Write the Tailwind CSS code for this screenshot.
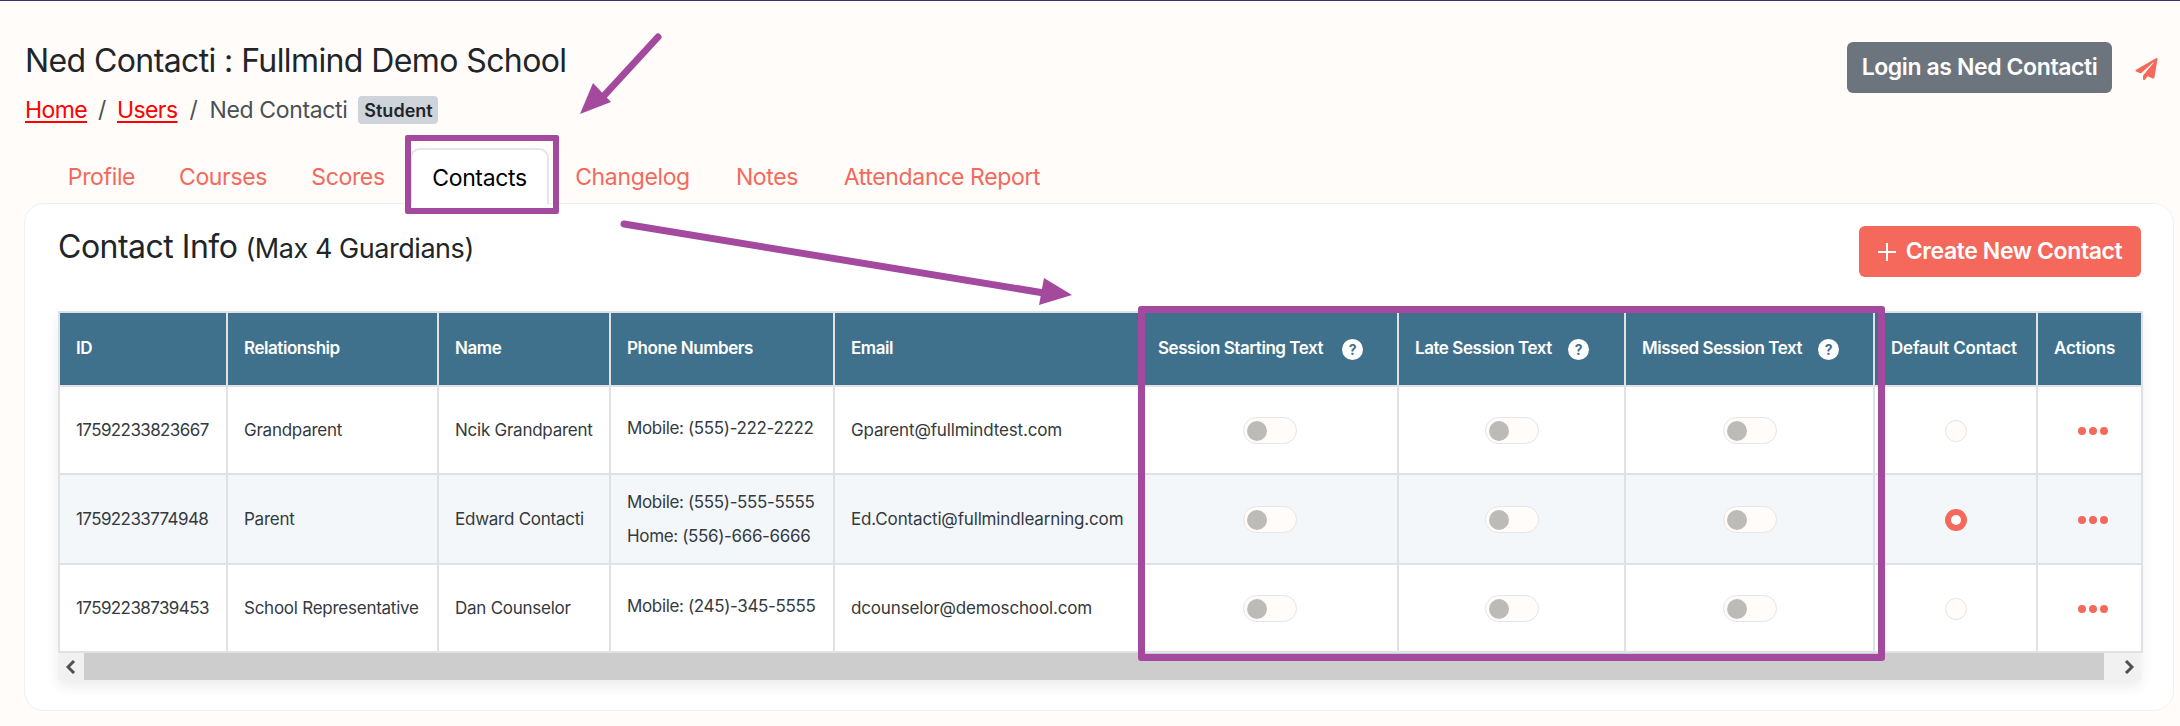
<!doctype html>
<html>
<head>
<meta charset="utf-8">
<script src="https://cdn.jsdelivr.net/npm/@tailwindcss/browser@4"></script>
</head>
<body class="m-0">
<div class="relative h-[726px] w-[2180px] overflow-hidden border-t border-[#3b2f6e] bg-[#fffcf9] font-['Inter',sans-serif] text-[#212529]">

	<!-- header -->
	<div class="flex h-[135px] justify-between pl-[25px] pr-[22px] pt-[41px]">
		<div class="flex flex-col">
			<h1 class="h-[38px] text-[32px] leading-[38px] tracking-[-0.6px]">Ned Contacti : Fullmind Demo School</h1>
			<div class="mt-[16px] flex h-[28px] items-center text-[23px] tracking-[-0.35px] text-[#495057]">
				<a class="tracking-[-0.6px] text-[#f00] underline decoration-[1.5px] underline-offset-[3px]">Home</a>
				<span class="mx-[11px]">/</span>
				<a class="tracking-[-0.6px] text-[#f00] underline decoration-[1.5px] underline-offset-[3px]">Users</a>
				<span class="mx-[12px]">/</span>
				<span>Ned Contacti</span>
				<span class="ml-[11px] flex h-[28px] w-[80px] items-center justify-center rounded-[4px] bg-[#ced4da] text-[18px] font-semibold tracking-normal text-[#212529]">Student</span>
			</div>
		</div>
		<div class="flex items-start">
			<button class="h-[51px] w-[265px] rounded-[6px] bg-[#6c757d] text-[23px] font-semibold tracking-[-0.4px] text-white">Login as Ned Contacti</button>
			<svg class="ml-[23px] mt-[16px] h-[22px] w-[23px] fill-[#f4695c]" viewBox="0 0 512 512"><path d="M476 3.2L12.5 270.6c-18.1 10.4-15.8 35.6 2.2 43.2L121 358.4l287.3-253.2c5.5-4.9 13.3 2.6 8.6 8.3L176 407v80.5c0 23.6 28.5 32.9 42.5 15.8L282 426l124.6 52.2c14.2 6 30.4-2.9 33-18.2l72-432C515 7.8 493.3-6.8 476 3.2z"/></svg>
		</div>
	</div>

	<!-- tabs -->
	<div class="relative z-10 flex h-[67px] gap-[6px] pl-[49px] pt-[12px] text-center text-[23px] leading-[59px] tracking-[-0.35px] text-[#f4695c]">
		<a class="w-[105px]">Profile</a>
		<a class="w-[126px]">Courses</a>
		<a class="w-[112px]">Scores</a>
		<a class="h-[56px] w-[139px] rounded-t-[10px] border-2 border-b-0 border-[#e2e5e9] bg-white leading-[56px] text-black">Contacts</a>
		<a class="w-[155px]">Changelog</a>
		<a class="w-[102px]">Notes</a>
		<a class="w-[236px]">Attendance Report</a>
	</div>

	<!-- card -->
	<div class="ml-[24px] h-[508px] w-[2150px] rounded-[20px] border border-[#f0f0f0] bg-white pl-[33px] pr-[33px] pt-[22px]">
		<div class="flex h-[85px] w-[2083px] items-start justify-between">
			<h2 class="flex items-baseline text-[32px] leading-[42px] tracking-[-0.5px] text-[#212529]">Contact Info<span class="ml-[8px] text-[27px] tracking-[-0.45px]">(Max 4 Guardians)</span></h2>
			<button class="flex h-[51px] w-[282px] items-center justify-center gap-[10px] rounded-[6px] bg-[#f4695c] text-[23px] font-semibold tracking-[-0.4px] text-white">
				<svg class="h-[18px] w-[18px] stroke-white" viewBox="0 0 18 18" fill="none" stroke-width="2"><path d="M9 0v18M0 9h18"/></svg>
				Create New Contact
			</button>
		</div>

		<!-- table with its scrollbar -->
		<div class="w-[2083px] shadow-[0_6px_12px_rgba(0,0,0,0.08)]">
			<table class="w-[2083px] table-fixed border-collapse border-t-2 border-[#dee2e6] text-[17px] tracking-[-0.25px] text-[#343a40] [&_td]:border-2 [&_td]:border-[#dee2e6] [&_td]:px-[16px] [&_td]:pt-[1px] [&_th]:border-2 [&_th]:border-[#dee2e6] [&_th]:px-[16px] [&_th]:text-left [&_th]:font-semibold [&_th]:tracking-[-0.45px]">
				<colgroup>
					<col class="w-[168px]"><col class="w-[211px]"><col class="w-[172px]"><col class="w-[224px]"><col class="w-[307px]"><col class="w-[257px]"><col class="w-[227px]"><col class="w-[249px]"><col class="w-[163px]"><col class="w-[105px]">
				</colgroup>
				<thead>
					<tr class="h-[74px] bg-[#40718c] text-white">
						<th>ID</th>
						<th>Relationship</th>
						<th>Name</th>
						<th>Phone Numbers</th>
						<th>Email</th>
						<th><div class="flex items-center justify-between pr-[18px]">Session Starting Text<span class="flex h-[21px] w-[21px] items-center justify-center rounded-full bg-white text-[14px] font-bold text-[#40718c]">?</span></div></th>
						<th><div class="flex items-center justify-between pr-[19px]">Late Session Text<span class="flex h-[21px] w-[21px] items-center justify-center rounded-full bg-white text-[14px] font-bold text-[#40718c]">?</span></div></th>
						<th><div class="flex items-center justify-between pr-[18px]">Missed Session Text<span class="flex h-[21px] w-[21px] items-center justify-center rounded-full bg-white text-[14px] font-bold text-[#40718c]">?</span></div></th>
						<th class="whitespace-nowrap !tracking-[-0.2px]">Default Contact</th>
						<th class="!tracking-[-0.2px]">Actions</th>
					</tr>
				</thead>
				<tbody>
					<tr class="h-[88px]">
						<td class="tracking-[-0.6px]">17592233823667</td>
						<td>Grandparent</td>
						<td class="whitespace-nowrap">Ncik Grandparent</td>
						<td class="whitespace-nowrap tracking-[-0.35px]"><p class="mb-[4px]">Mobile: (555)-222-2222</p></td>
						<td class="tracking-[-0.15px]">Gparent@fullmindtest.com</td>
						<td><div class="mx-auto flex h-[27px] w-[54px] items-center rounded-full border border-[#e5e5e5] bg-[#fffcf9] pl-[3px]"><span class="h-[20px] w-[20px] rounded-full bg-[#bdbbb8]"></span></div></td>
						<td><div class="mx-auto flex h-[27px] w-[54px] items-center rounded-full border border-[#e5e5e5] bg-[#fffcf9] pl-[3px]"><span class="h-[20px] w-[20px] rounded-full bg-[#bdbbb8]"></span></div></td>
						<td><div class="mx-auto flex h-[27px] w-[54px] items-center rounded-full border border-[#e5e5e5] bg-[#fffcf9] pl-[3px]"><span class="h-[20px] w-[20px] rounded-full bg-[#bdbbb8]"></span></div></td>
						<td><div class="mx-auto h-[22px] w-[22px] rounded-full border border-[#e5e5e5] bg-[#fffcf9]"></div></td>
						<td class="!pl-[40px]"><div class="flex gap-[3px] pt-[1px]"><span class="h-[8px] w-[8px] rounded-full bg-[#f4695c]"></span><span class="h-[8px] w-[8px] rounded-full bg-[#f4695c]"></span><span class="h-[8px] w-[8px] rounded-full bg-[#f4695c]"></span></div></td>
					</tr>
					<tr class="h-[90px] bg-[#f3f7fa]">
						<td class="tracking-[-0.6px]">17592233774948</td>
						<td>Parent</td>
						<td class="whitespace-nowrap">Edward Contacti</td>
						<td class="whitespace-nowrap tracking-[-0.35px]"><p class="mb-[8px]">Mobile: (555)-555-5555</p><p>Home: (556)-666-6666</p></td>
						<td class="tracking-[-0.15px]">Ed.Contacti@fullmindlearning.com</td>
						<td><div class="mx-auto flex h-[27px] w-[54px] items-center rounded-full border border-[#e5e5e5] bg-[#fffcf9] pl-[3px]"><span class="h-[20px] w-[20px] rounded-full bg-[#bdbbb8]"></span></div></td>
						<td><div class="mx-auto flex h-[27px] w-[54px] items-center rounded-full border border-[#e5e5e5] bg-[#fffcf9] pl-[3px]"><span class="h-[20px] w-[20px] rounded-full bg-[#bdbbb8]"></span></div></td>
						<td><div class="mx-auto flex h-[27px] w-[54px] items-center rounded-full border border-[#e5e5e5] bg-[#fffcf9] pl-[3px]"><span class="h-[20px] w-[20px] rounded-full bg-[#bdbbb8]"></span></div></td>
						<td><div class="mx-auto h-[22px] w-[22px] rounded-full border-[6px] border-[#f4695c] bg-white"></div></td>
						<td class="!pl-[40px]"><div class="flex gap-[3px] pt-[1px]"><span class="h-[8px] w-[8px] rounded-full bg-[#f4695c]"></span><span class="h-[8px] w-[8px] rounded-full bg-[#f4695c]"></span><span class="h-[8px] w-[8px] rounded-full bg-[#f4695c]"></span></div></td>
					</tr>
					<tr class="h-[88px]">
						<td class="tracking-[-0.6px]">17592238739453</td>
						<td class="whitespace-nowrap">School Representative</td>
						<td>Dan Counselor</td>
						<td class="whitespace-nowrap tracking-[-0.35px]"><p class="mb-[4px]">Mobile: (245)-345-5555</p></td>
						<td class="tracking-[-0.15px]">dcounselor@demoschool.com</td>
						<td><div class="mx-auto flex h-[27px] w-[54px] items-center rounded-full border border-[#e5e5e5] bg-[#fffcf9] pl-[3px]"><span class="h-[20px] w-[20px] rounded-full bg-[#bdbbb8]"></span></div></td>
						<td><div class="mx-auto flex h-[27px] w-[54px] items-center rounded-full border border-[#e5e5e5] bg-[#fffcf9] pl-[3px]"><span class="h-[20px] w-[20px] rounded-full bg-[#bdbbb8]"></span></div></td>
						<td><div class="mx-auto flex h-[27px] w-[54px] items-center rounded-full border border-[#e5e5e5] bg-[#fffcf9] pl-[3px]"><span class="h-[20px] w-[20px] rounded-full bg-[#bdbbb8]"></span></div></td>
						<td><div class="mx-auto h-[22px] w-[22px] rounded-full border border-[#e5e5e5] bg-[#fffcf9]"></div></td>
						<td class="!pl-[40px]"><div class="flex gap-[3px] pt-[1px]"><span class="h-[8px] w-[8px] rounded-full bg-[#f4695c]"></span><span class="h-[8px] w-[8px] rounded-full bg-[#f4695c]"></span><span class="h-[8px] w-[8px] rounded-full bg-[#f4695c]"></span></div></td>
					</tr>
				</tbody>
			</table>
			<div class="flex h-[27px] bg-[#cdcdcd]">
				<div class="flex w-[26px] items-center justify-center bg-[#f1f1f1]"><svg class="h-[14px] w-[10px] stroke-[#505050]" viewBox="0 0 10 14" fill="none" stroke-width="3"><path d="M8 1L2 7l6 6"/></svg></div>
				<div class="flex-1"></div>
				<div class="flex w-[37px] items-center justify-end bg-[#f1f1f1] pr-[7px]"><svg class="h-[14px] w-[10px] stroke-[#505050]" viewBox="0 0 10 14" fill="none" stroke-width="3"><path d="M2 1l6 6-6 6"/></svg></div>
			</div>
		</div>
	</div>

	<!-- purple annotations on top of the screenshot -->
	<div class="absolute left-[405px] top-[134px] z-20 h-[79px] w-[154px] rounded-[2px] border-[6px] border-[#a34a9f]"></div>
	<div class="absolute left-[1138px] top-[305px] z-20 h-[355px] w-[747px] rounded-[3px] border-[7px] border-[#a34a9f]"></div>
	<svg class="absolute left-0 top-[-1px] z-20 h-[726px] w-[2180px] fill-[#a34a9f] stroke-[#a34a9f]" viewBox="0 0 2180 726">
		<path d="M658 37L600 100" fill="none" stroke-width="7" stroke-linecap="round"/>
		<path d="M580 114L593 83L611 102Z" stroke="none"/>
		<path d="M624 224L1050 294" fill="none" stroke-width="7" stroke-linecap="round"/>
		<path d="M1072 295L1044 278L1039 305Z" stroke="none"/>
	</svg>
</div>
</body>
</html>
